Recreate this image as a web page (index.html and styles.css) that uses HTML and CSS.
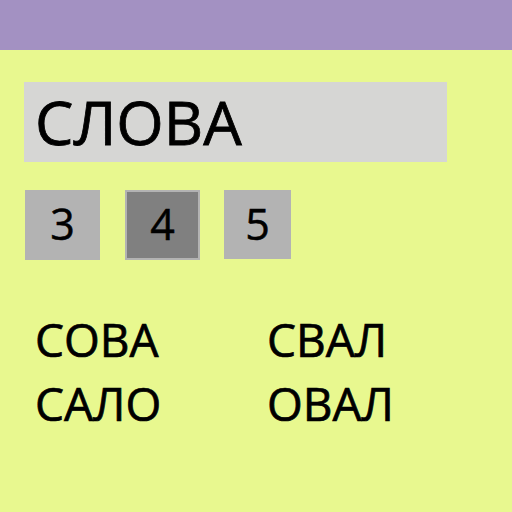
FILE: index.html
```html
<!DOCTYPE html>
<html>
<head>
<meta charset="utf-8">
<link rel="stylesheet" href="styles.css">
</head>
<body>
<div class="header"></div>
<div class="main">
  <div class="title">СЛОВА</div>
  <div class="lengths">
    <div class="len len-a">3</div>
    <div class="len len-b active">4</div>
    <div class="len len-c">5</div>
  </div>
  <div class="words">
    <div class="word">СОВА</div>
    <div class="word">СВАЛ</div>
    <div class="word">САЛО</div>
    <div class="word">ОВАЛ</div>
  </div>
</div>
</body>
</html>
```
FILE: styles.css
```css
html, body {
  margin: 0;
  padding: 0;
  width: 512px;
  height: 512px;
  background: #e8f88f;
  font-family: "Open Sans", "Noto Sans", sans-serif;
  color: #000;
  overflow: hidden;
}
.header {
  height: 50px;
  background: #a391c2;
}
.main {
  padding: 32px 0 0 24px;
}
.title {
  width: 412px;
  height: 80px;
  background: #d6d6d4;
  padding-left: 11px;
  font-size: 61px;
  line-height: 80px;
  box-sizing: content-box;
  -webkit-text-stroke: 0.8px #000;
}
.lengths {
  display: flex;
  margin-top: 28px;
  margin-left: 1px;
  height: 70px;
  align-items: flex-start;
}
.len {
  box-sizing: border-box;
  background: #b3b3b3;
  height: 70px;
  width: 75px;
  padding-bottom: 3px;
  display: flex;
  align-items: center;
  justify-content: center;
  font-size: 43px;
  -webkit-text-stroke: 0.5px #000;
}
.len-b { margin-left: 25px; }
.len-c { margin-left: 24px; width: 67px; height: 69px; }
.active {
  background: #808080;
  border: 2px solid #b3b3b3;
}
.words {
  display: grid;
  grid-template-columns: 232px 200px;
  margin-top: 47px;
  margin-left: 11px;
  font-size: 46px;
  line-height: 64px;
  -webkit-text-stroke: 0.7px #000;
}
```
